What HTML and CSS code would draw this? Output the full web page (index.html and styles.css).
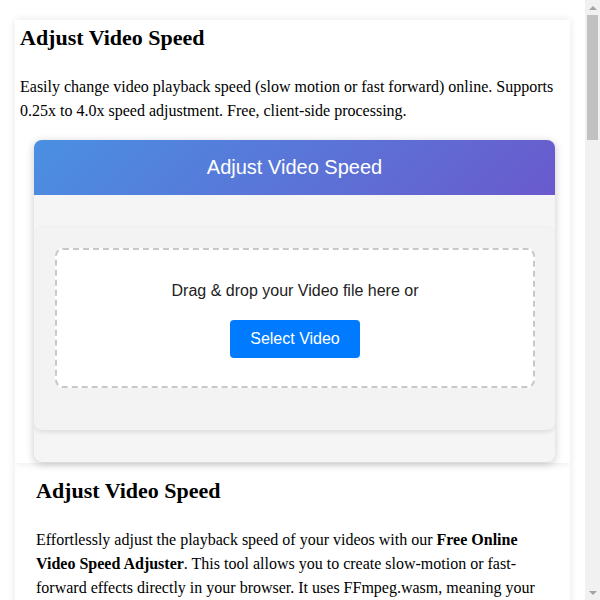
FILE: index.html
```html
<!DOCTYPE html>
<html lang="en">
<head>
<meta charset="utf-8">
<title>Adjust Video Speed</title>
<link rel="stylesheet" href="styles.css">
</head>
<body>
<div class="page">
  <section class="card card-tool">
    <h2 class="title">Adjust Video Speed</h2>
    <p class="intro">Easily change video playback speed (slow motion or fast forward) online. Supports 0.25x to 4.0x speed adjustment. Free, client-side processing.</p>
    <div class="tool">
      <div class="tool-header">Adjust Video Speed</div>
      <div class="tool-body">
        <div class="panel">
          <div class="dropzone">
            <p class="drop-text">Drag &amp; drop your Video file here or</p>
            <button class="select-btn" type="button">Select Video</button>
          </div>
        </div>
      </div>
    </div>
  </section>
  <section class="card card-info">
    <h2 class="info-title">Adjust Video Speed</h2>
    <p class="info-text">Effortlessly adjust the playback speed of your videos with our <strong>Free Online Video Speed Adjuster</strong>. This tool allows you to create slow-motion or fast-forward effects directly in your browser. It uses FFmpeg.wasm, meaning your video is processed locally on your device and never uploaded to any server, keeping your files private and secure.</p>
    <h3 class="info-sub">How to Use</h3>
    <ol class="info-list">
      <li>Click "Select Video" or drag and drop a video file into the upload area.</li>
      <li>Choose the desired playback speed, from 0.25x (slow motion) up to 4.0x (fast forward).</li>
      <li>Click the process button and wait for the conversion to finish.</li>
      <li>Preview the result and download your adjusted video.</li>
    </ol>
    <h3 class="info-sub">Features</h3>
    <ul class="info-list">
      <li>Supports common formats such as MP4, WebM, MOV and AVI.</li>
      <li>Audio pitch is preserved while the tempo changes.</li>
      <li>No registration, no watermarks and no file size limits imposed by a server.</li>
      <li>Works on desktop and mobile browsers.</li>
      <li>Completely free to use.</li>
    </ul>
    <h3 class="info-sub">Why Change Video Speed?</h3>
    <p class="info-text">Slowing down a video helps you study fast movements in sports, dance or tutorials, while speeding it up lets you turn long recordings into short, engaging time-lapse clips.</p>
    <p class="info-text">Because everything happens in your browser, processing time depends on your device and the length of the video.</p>
  </section>
</div>
<div class="scrollbar" aria-hidden="true">
  <div class="sb-arrow sb-up"></div>
  <div class="sb-track"><div class="sb-thumb"></div></div>
  <div class="sb-arrow sb-down"></div>
</div>
</body>
</html>
```

FILE: styles.css
```css
html, body {
  margin: 0;
  padding: 0;
  background: #ffffff;
}

body {
  font-family: "Liberation Serif", "Times New Roman", serif;
  font-size: 16px;
  color: #000;
  margin-right: 15px;
}

.page {
  padding: 20px 15px 40px;
}

.card {
  background: #fff;
  box-shadow: 0 0 8px rgba(0, 0, 0, 0.1);
}

.card-tool {
  padding: 5px 5px 1px;
  position: relative;
  z-index: 1;
}

.title {
  font-size: 22px;
  font-weight: bold;
  margin: 0 0 24px;
  line-height: normal;
}

.intro {
  margin: 0 0 17px;
  line-height: 24px;
}

.tool {
  margin-left: 14px;
  width: 521px;
  border-radius: 8px;
  box-shadow: 0 2px 8px rgba(0, 0, 0, 0.22);
  overflow: hidden;
  background: #f5f5f5;
}

.tool-header {
  background: linear-gradient(135deg, #4a90e2, #6a5acd);
  color: #fff;
  font-family: "Liberation Sans", Arial, sans-serif;
  font-size: 20px;
  line-height: 23px;
  padding: 16px 0;
  text-align: center;
}

.tool-body {
  padding: 32px 0;
}

.panel {
  background: #f3f3f3;
  border-radius: 8px;
  box-shadow: 0 2px 5px rgba(0, 0, 0, 0.1);
  padding: 21px 20px 42px 21px;
}

.dropzone {
  background: #fff;
  border: 2px dashed #c8c8c8;
  border-radius: 8px;
  padding: 32px 20px 28px;
  text-align: center;
  font-family: "Liberation Sans", Arial, sans-serif;
}

.drop-text {
  margin: 0 0 20px;
  font-size: 16px;
  line-height: 18px;
  color: #222;
}

.select-btn {
  display: inline-block;
  background: #007bff;
  color: #fff;
  border: none;
  border-radius: 4px;
  font-family: "Liberation Sans", Arial, sans-serif;
  font-size: 16px;
  line-height: 18px;
  padding: 10px 20px;
  width: 130px;
  cursor: pointer;
}

.card-info {
  padding: 15px 20px 20px 21px;
}

.info-title {
  font-size: 22px;
  font-weight: bold;
  margin: 0 0 24px;
  line-height: normal;
}

.info-text {
  margin: 0 0 16px;
  line-height: 24px;
}

.info-sub {
  font-size: 19px;
  margin: 24px 0 12px;
}

.info-list {
  margin: 0 0 16px;
  padding-left: 28px;
  line-height: 24px;
}

.info-list li {
  margin-bottom: 6px;
}

/* drawn scrollbar overlay */
.scrollbar {
  position: fixed;
  top: 0;
  right: 0;
  width: 15px;
  height: 100vh;
  background: #f1f1f1;
  display: flex;
  flex-direction: column;
  z-index: 10;
}

.sb-arrow {
  height: 15px;
  flex: none;
  display: flex;
  align-items: center;
  justify-content: center;
}

.sb-arrow::before {
  content: "";
  width: 0;
  height: 0;
  border-left: 4px solid transparent;
  border-right: 4px solid transparent;
}

.sb-up::before {
  border-bottom: 4px solid #a3a3a3;
}

.sb-down::before {
  border-top: 4px solid #a3a3a3;
}

.sb-track {
  flex: 1;
  padding: 0 2px;
}

.sb-thumb {
  height: 125px;
  background: #c1c1c1;
}
```
